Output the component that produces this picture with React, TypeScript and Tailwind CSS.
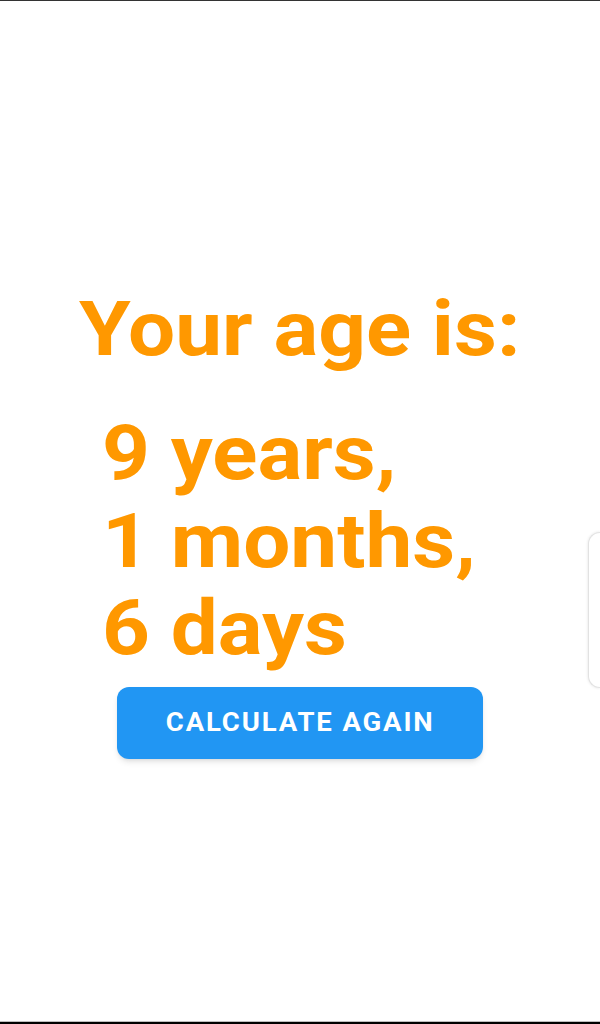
export default function App() {
  return (
    <div className="relative h-[1024px] w-[600px] overflow-hidden bg-white font-['Roboto',sans-serif]">
      <div className="h-px bg-[#333333]" />
      <main className="flex flex-col pt-[284px]">
        <h1 className="text-center text-[76px] font-bold leading-[89px] text-[#FF9800]">
          <span className="inline-block origin-center scale-x-110">Your age is:</span>
        </h1>
        <div className="mt-[36px] pl-[102px] text-[76px] font-bold leading-[87.5px] text-[#FF9800]">
          <p className="inline-block origin-left scale-x-110">
            9 years,
            <br />1 months,
            <br />6 days
          </p>
        </div>
        <button className="mx-auto mt-[14px] h-[72px] w-[366px] rounded-xl bg-[#2196F3] text-[25px] font-bold text-white shadow-md">
          <span className="inline-block origin-center scale-x-110 tracking-[1.7px]">CALCULATE AGAIN</span>
        </button>
      </main>
      {/* edge panel handle */}
      <div className="absolute right-0 top-[532px] h-[156px] w-[12px] rounded-l-2xl border border-r-0 border-[#e2e2e2] bg-white shadow-[0_0_3px_rgba(0,0,0,0.12)]" />
      <div className="absolute bottom-0 left-0 right-0">
        <div className="h-px bg-[#bdbdbd]" />
        <div className="h-[2px] bg-black" />
      </div>
    </div>
  );
}
